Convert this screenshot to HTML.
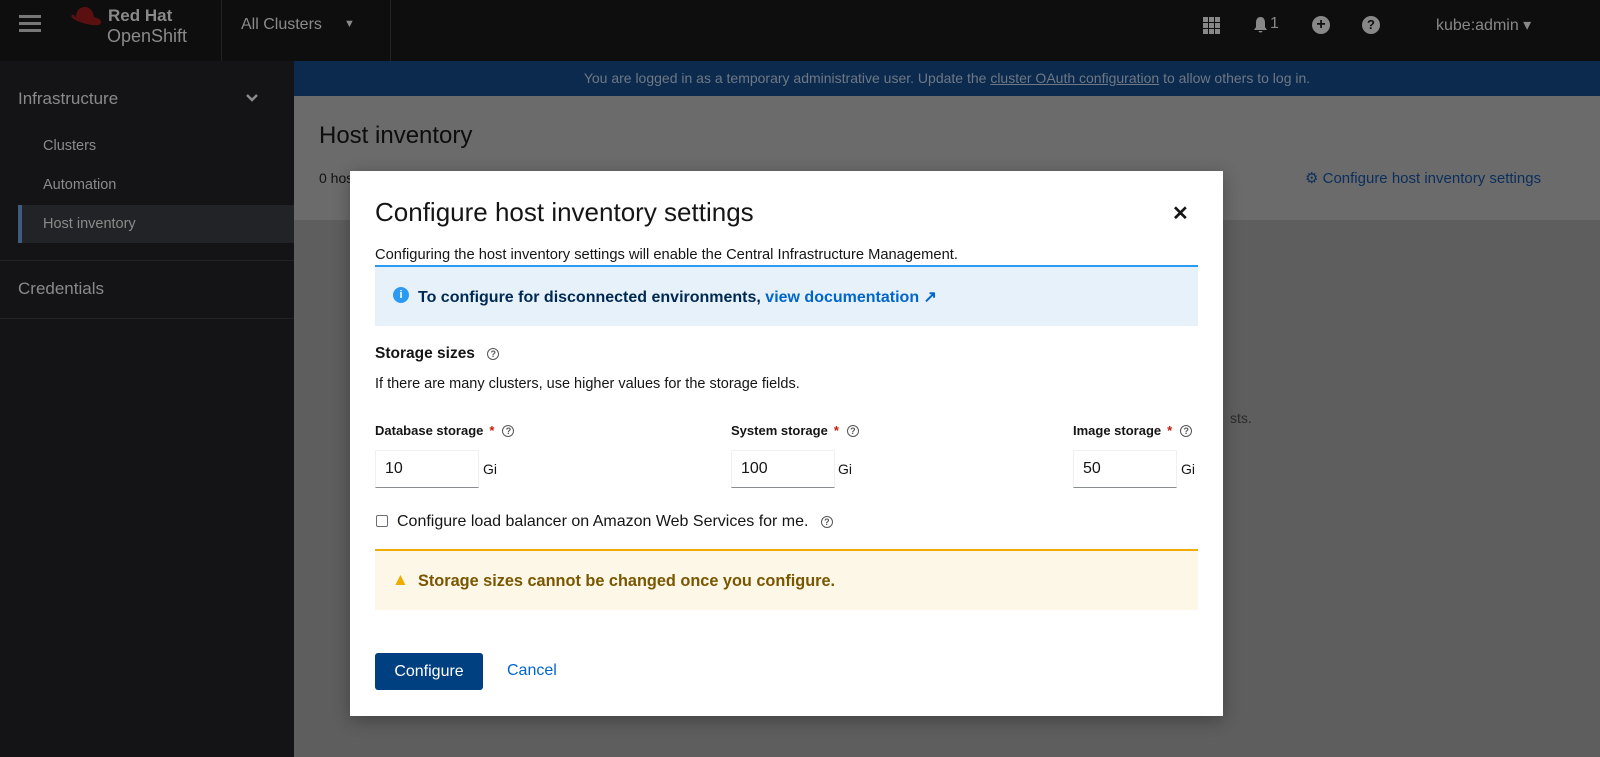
<!DOCTYPE html>
<html><head><style>
*{box-sizing:border-box;margin:0;padding:0}
body{width:1600px;height:757px;overflow:hidden;background:#5e5e5e;font-family:"Liberation Sans",sans-serif;position:relative}
.top{position:absolute;left:0;top:0;width:1600px;height:61px;background:#0e0e0e}
.side{position:absolute;left:0;top:61px;width:294px;height:696px;background:#141416}
.banner{position:absolute;left:294px;top:61px;width:1306px;height:35px;background:#0b2a4e;color:#6f7884;font-size:14px;text-align:center;line-height:35px}
.ph{position:absolute;left:294px;top:96px;width:1306px;height:124px;background:#6b6b6b}
.t{position:absolute;white-space:nowrap}
.modal{position:absolute;left:350px;top:171px;width:873px;height:545px;background:#fff;box-shadow:0 4px 16px rgba(0,0,0,.3)}
.lab{font-size:13px;font-weight:bold;color:#151515}
.req{color:#c9190b;margin-left:6px}
.q{display:inline-block;width:12px;height:12px;border:1.3px solid #555;border-radius:50%;font-size:9px;line-height:10px;text-align:center;color:#555;margin-left:8px;vertical-align:1px;font-weight:bold}
.inp{position:absolute;height:38px;border:1px solid #f0f0f0;border-bottom:1px solid #8a8d90;font-size:16px;padding:9px 9px;color:#151515}
.gi{position:absolute;font-size:14px;color:#151515}
</style></head><body>
<div class="top"></div>
<div style="position:absolute;left:19px;top:15px;width:22px;height:3px;background:#777;box-shadow:0 7px 0 #777,0 14px 0 #777"></div>
<svg style="position:absolute;left:68px;top:4px" width="36" height="28" viewBox="0 0 36 28"><path d="M8 14 C8 6 12 3 17 3 C22 3 25 7 26 13 C30 14 34 16 33 19 C32 23 20 21 12 18 C4 15 2 12 4 11 C6 10 7 12 8 14Z" fill="#5a1010"/></svg>
<div class="t" style="left:108px;top:6px;color:#8a8a8a;font-weight:bold;font-size:17px">Red Hat</div>
<div class="t" style="left:107px;top:26px;color:#8a8a8a;font-size:18px">OpenShift</div>
<div style="position:absolute;left:221px;top:0;width:1px;height:61px;background:#222"></div>
<div style="position:absolute;left:390px;top:0;width:1px;height:61px;background:#222"></div>
<div class="t" style="left:241px;top:16px;color:#8a8a8a;font-size:16px">All Clusters</div>
<div class="t" style="left:344px;top:18px;color:#8a8a8a;font-size:11px">▼</div>
<div style="position:absolute;left:1203px;top:17px;width:17px;height:17px;background:repeating-linear-gradient(90deg,#888 0 5px,transparent 5px 6px),#0e0e0e;-webkit-mask:repeating-linear-gradient(0deg,#000 0 5px,transparent 5px 6px)"></div>
<svg style="position:absolute;left:1253px;top:16px" width="15" height="18" viewBox="0 0 15 18"><path d="M7.5 1 C4 1 3 4 3 7 L3 11 L1 14 L14 14 L12 11 L12 7 C12 4 11 1 7.5 1Z M5.5 15 L9.5 15 C9.5 17 5.5 17 5.5 15Z" fill="#888"/></svg>
<div class="t" style="left:1270px;top:15px;color:#888;font-size:16px">1</div>
<div style="position:absolute;left:1312px;top:16px;width:18px;height:18px;border-radius:50%;background:#888;color:#0e0e0e;font-weight:bold;font-size:16px;line-height:18px;text-align:center">+</div>
<div style="position:absolute;left:1362px;top:16px;width:18px;height:18px;border-radius:50%;background:#888;color:#0e0e0e;font-weight:bold;font-size:13px;line-height:18px;text-align:center">?</div>
<div class="t" style="left:1436px;top:15px;color:#888;font-size:16px">kube:admin ▾</div>

<div class="side"></div>
<div class="t" style="left:18px;top:89px;color:#8a8a8a;font-size:17px">Infrastructure</div>
<svg style="position:absolute;left:245px;top:93px" width="14" height="10" viewBox="0 0 14 10"><path d="M2 2 L7 7 L12 2" stroke="#8a8a8a" stroke-width="2.5" fill="none"/></svg>
<div class="t" style="left:43px;top:138px;color:#8a8a8a;font-size:14.5px">Clusters</div>
<div class="t" style="left:43px;top:177px;color:#8a8a8a;font-size:14.5px">Automation</div>
<div style="position:absolute;left:18px;top:205px;width:276px;height:38px;background:#222326;border-left:4px solid #3d5c80"></div>
<div class="t" style="left:43px;top:216px;color:#8a8a8a;font-size:14.5px">Host inventory</div>
<div style="position:absolute;left:0;top:260px;width:294px;height:1px;background:#222"></div>
<div class="t" style="left:18px;top:279px;color:#8a8a8a;font-size:17px">Credentials</div>
<div style="position:absolute;left:0;top:318px;width:294px;height:1px;background:#222"></div>

<div class="banner">You are logged in as a temporary administrative user. Update the <u>cluster OAuth configuration</u> to allow others to log in.</div>
<div class="ph"></div>
<div class="t" style="left:319px;top:122px;color:#0d0d0d;font-size:24px">Host inventory</div>
<div class="t" style="left:319px;top:170px;color:#111;font-size:14px">0 hos</div>
<div class="t" style="left:1305px;top:169px;color:#0b2e5c;font-size:15px">⚙ Configure host inventory settings</div>
<div class="t" style="left:1230px;top:410px;color:#2a2a2a;font-size:14px">sts.</div>

<div class="modal">
<div class="t" style="left:25px;top:26px;font-size:26px;color:#151515">Configure host inventory settings</div>
<div class="t" style="left:822px;top:30px;font-size:20px;font-weight:bold;color:#151515">✕</div>
<div class="t" style="left:25px;top:76px;font-size:14.7px;color:#151515">Configuring the host inventory settings will enable the Central Infrastructure Management.</div>
<div style="position:absolute;left:25px;top:94px;width:823px;height:61px;background:#e7f1fa;border-top:2px solid #2b9af3"></div>
<div style="position:absolute;left:43px;top:116px;width:16px;height:16px;border-radius:50%;background:#2b9af3;color:#fff;font-size:11px;font-weight:bold;text-align:center;line-height:16px">i</div>
<div class="t" style="left:68px;top:116px;font-size:16px;font-weight:bold;color:#002952">To configure for disconnected environments, <span style="color:#0066cc">view documentation ↗</span></div>
<div class="t" style="left:25px;top:174px;font-size:15.5px;font-weight:bold;color:#151515">Storage sizes <span class="q">?</span></div>
<div class="t" style="left:25px;top:205px;font-size:14.5px;color:#151515">If there are many clusters, use higher values for the storage fields.</div>
<div class="t lab" style="left:25px;top:252px">Database storage<span class="req">*</span><span class="q">?</span></div>
<div class="t lab" style="left:381px;top:252px">System storage<span class="req">*</span><span class="q">?</span></div>
<div class="t lab" style="left:723px;top:252px">Image storage<span class="req">*</span><span class="q">?</span></div>
<div class="inp" style="left:25px;top:279px;width:104px">10</div><div class="gi" style="left:133px;top:290px">Gi</div>
<div class="inp" style="left:381px;top:279px;width:104px">100</div><div class="gi" style="left:488px;top:290px">Gi</div>
<div class="inp" style="left:723px;top:279px;width:104px">50</div><div class="gi" style="left:831px;top:290px">Gi</div>
<div style="position:absolute;left:26px;top:344px;width:12px;height:12px;border:1px solid #6a6e73;border-radius:2px"></div>
<div class="t" style="left:47px;top:342px;font-size:16px;color:#151515">Configure load balancer on Amazon Web Services for me. <span class="q">?</span></div>
<div style="position:absolute;left:25px;top:378px;width:823px;height:61px;background:#fdf7e7;border-top:2px solid #f0ab00"></div>
<div class="t" style="left:42px;top:399px;font-size:17px;color:#f0ab00">▲</div>
<div class="t" style="left:68px;top:401px;font-size:16.3px;font-weight:bold;color:#795600">Storage sizes cannot be changed once you configure.</div>
<div style="position:absolute;left:25px;top:482px;width:108px;height:37px;background:#004080;border-radius:3px;color:#fff;font-size:16px;text-align:center;line-height:37px">Configure</div>
<div class="t" style="left:157px;top:491px;font-size:16px;color:#0066cc">Cancel</div>
</div>
</body></html>
